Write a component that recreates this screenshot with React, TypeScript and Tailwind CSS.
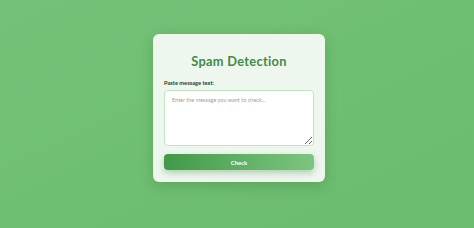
import React from "react";

export default function App() {
  return (
    <div className="w-[474px] h-[228px] bg-gradient-to-br from-[#74c277] to-[#6abc6e] flex justify-center pt-[34px] pl-[4px]" style={{ fontFamily: '"Lato", "Noto Sans", sans-serif' }}>
      <div className="w-[172px] h-[148px] bg-[#eef7ee] rounded-[6px] shadow-[0_4px_14px_rgba(0,60,0,0.18)] px-[11px] pt-[18px] flex flex-col">
        <h1 className="text-[12.8px] leading-[18px] font-bold text-center text-[#3f8b47] tracking-[0.3px]">Spam Detection</h1>
        <label className="mt-[9px] text-[5.7px] leading-[8px] font-bold text-[#2d3a2e]">Paste message text:</label>
        <textarea
          className="mt-[3px] h-[56px] w-full resize-y bg-white border border-[#c4e2c4] rounded-[4px] px-[7px] py-[5px] text-[5.5px] leading-[8px] text-[#333] placeholder:text-[#a0a0a0] outline-none"
          placeholder="Enter the message you want to check..."
        />
        <button className="mt-[8px] h-[16px] w-full rounded-[4px] bg-gradient-to-r from-[#3f9a47] to-[#7dc580] text-white text-[6px] font-bold shadow-[0_3px_6px_rgba(40,110,40,0.3)]">Check</button>
      </div>
    </div>
  );
}
